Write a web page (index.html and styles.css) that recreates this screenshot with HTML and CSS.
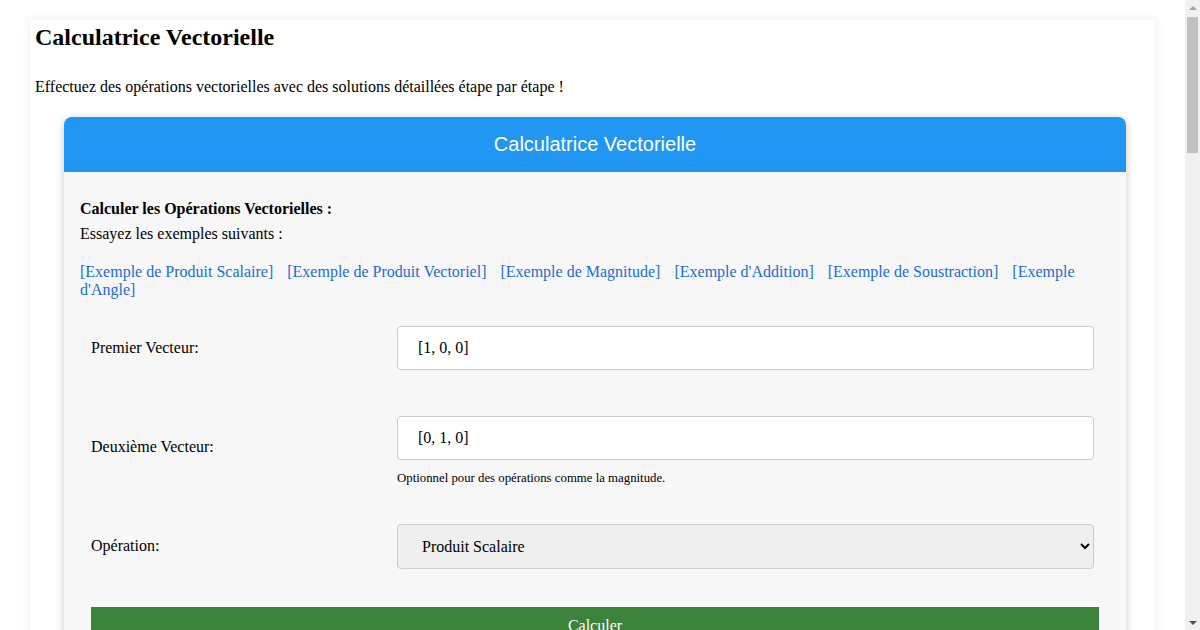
FILE: index.html
```html
<!DOCTYPE html>
<html lang="fr">
<head>
<meta charset="utf-8">
<title>Calculatrice Vectorielle</title>
<link rel="stylesheet" href="styles.css">
</head>
<body>
<div class="page">
  <h2 class="page-title">Calculatrice Vectorielle</h2>
  <p class="page-intro">Effectuez des opérations vectorielles avec des solutions détaillées étape par étape !</p>

  <div class="card">
    <div class="card-header">Calculatrice Vectorielle</div>
    <div class="card-body">
      <div class="intro">
        <strong>Calculer les Opérations Vectorielles :</strong><br>
        Essayez les exemples suivants :
      </div>
      <div class="examples">
        <a href="#" class="ex">[Exemple de Produit Scalaire]</a>
        <a href="#" class="ex">[Exemple de Produit Vectoriel]</a>
        <a href="#" class="ex">[Exemple de Magnitude]</a>
        <a href="#" class="ex">[Exemple d'Addition]</a>
        <a href="#" class="ex">[Exemple de Soustraction]</a>
        <a href="#" class="ex">[Exemple d'Angle]</a>
      </div>

      <form class="form">
        <div class="form-row">
          <label class="form-label" for="v1">Premier Vecteur:</label>
          <div class="form-field">
            <input id="v1" class="text-input" type="text" value="[1, 0, 0]">
          </div>
        </div>
        <div class="form-row form-row-help">
          <label class="form-label form-label-low" for="v2">Deuxième Vecteur:</label>
          <div class="form-field">
            <input id="v2" class="text-input" type="text" value="[0, 1, 0]">
            <div class="help">Optionnel pour des opérations comme la magnitude.</div>
          </div>
        </div>
        <div class="form-row form-row-last">
          <label class="form-label" for="op">Opération:</label>
          <div class="form-field">
            <select id="op" class="select">
              <option>Produit Scalaire</option>
              <option>Produit Vectoriel</option>
              <option>Magnitude</option>
              <option>Addition</option>
              <option>Soustraction</option>
              <option>Angle</option>
            </select>
          </div>
        </div>
        <button type="button" class="submit">Calculer</button>
      </form>

      <div class="result-area"></div>
    </div>
  </div>
</div>

<div class="scrollbar" aria-hidden="true">
  <div class="sb-arrow sb-up"></div>
  <div class="sb-thumb"></div>
  <div class="sb-track"></div>
  <div class="sb-arrow sb-down"></div>
</div>
</body>
</html>
```

FILE: styles.css
```css
html, body {
  margin: 0;
  padding: 0;
  background: #ffffff;
}

body {
  margin-right: 15px;
  font-family: "Liberation Serif", "Times New Roman", serif;
  font-size: 16px;
  color: #000;
}

.page {
  margin: 20px 30px 0;
  padding: 4px 5px 40px;
  background: #ffffff;
  box-shadow: 0 0 10px rgba(0, 0, 0, 0.08);
}

.page-title {
  margin: 0;
  font-size: 24px;
  font-weight: bold;
  line-height: 26.6px;
}

.page-intro {
  margin: 27px 0 0;
  line-height: 17.7px;
}

.card {
  margin: 22px 0 0 29px;
  width: 1062px;
  border-radius: 8px;
  box-shadow: 0 2px 8px rgba(0, 0, 0, 0.22);
  background: #f7f7f7;
}

.card-header {
  background: #2196f3;
  color: #fff;
  font-family: "Liberation Sans", Arial, sans-serif;
  font-size: 20px;
  line-height: 23px;
  text-align: center;
  padding: 16px 0;
  border-radius: 8px 8px 0 0;
}

.card-body {
  padding: 24px 16px 40px;
}

.intro {
  line-height: 25px;
}

.examples {
  margin-top: 17px;
  line-height: 18px;
}

.ex {
  color: #1a6dd0;
  text-decoration: none;
  margin-right: 10px;
}

.form {
  margin-top: 27px;
  padding-left: 11px;
}

.form-row {
  display: flex;
  align-items: flex-start;
  margin-bottom: 46px;
}

.form-row-help {
  margin-bottom: 39px;
}

.form-row-last {
  margin-bottom: 38px;
}

.form-label {
  flex: 0 0 306px;
  line-height: 44px;
}

.form-label-low {
  padding-top: 9px;
}

.form-field {
  flex: 0 0 697px;
}

.text-input {
  display: block;
  box-sizing: border-box;
  width: 697px;
  height: 44px;
  margin: 0;
  padding: 0 20px;
  border: 1px solid #cccccc;
  border-radius: 4px;
  background: #ffffff;
  font-family: "Liberation Serif", "Times New Roman", serif;
  font-size: 16px;
  color: #000;
}

.help {
  margin-top: 11px;
  font-size: 12.8px;
  line-height: 14px;
}

.select {
  display: block;
  box-sizing: border-box;
  width: 697px;
  height: 45px;
  margin: 0;
  padding: 0 20px;
  border: 1px solid #cccccc;
  border-radius: 4px;
  background-color: #efefef;
  font-family: "Liberation Serif", "Times New Roman", serif;
  font-size: 16px;
  color: #000;
}

.submit {
  display: block;
  width: 1008px;
  margin: 0;
  padding: 10px 0 12px;
  border: none;
  background: #3b833a;
  color: #ffffff;
  font-family: "Liberation Serif", "Times New Roman", serif;
  font-size: 16px;
  line-height: 17.7px;
  cursor: pointer;
}

.result-area {
  height: 1900px;
}

/* imitation of the browser's vertical scrollbar, drawn over the right edge */
.scrollbar {
  position: fixed;
  top: 0;
  right: 0;
  width: 15px;
  height: 100vh;
  background: #f1f1f1;
  display: flex;
  flex-direction: column;
  align-items: center;
}

.sb-arrow {
  flex: 0 0 15px;
  width: 15px;
  display: flex;
  align-items: center;
  justify-content: center;
}

.sb-up::before {
  content: "";
  border-left: 4px solid transparent;
  border-right: 4px solid transparent;
  border-bottom: 4px solid #a3a3a3;
}

.sb-down::before {
  content: "";
  border-left: 4px solid transparent;
  border-right: 4px solid transparent;
  border-top: 4px solid #505050;
}

.sb-thumb {
  flex: 0 0 136px;
  width: 11px;
  margin-top: 2px;
  background: #c1c1c1;
}

.sb-track {
  flex: 1 1 auto;
}
```
